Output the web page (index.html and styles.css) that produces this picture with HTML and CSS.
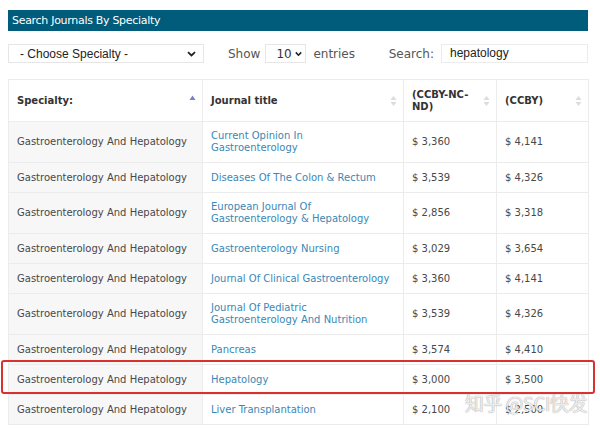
FILE: index.html
```html
<!DOCTYPE html>
<html>
<head>
<meta charset="utf-8">
<link rel="stylesheet" href="styles.css">
</head>
<body>
<div class="page">
  <div class="titlebar">Search Journals By Specialty</div>
  <div class="controls">
    <div class="select specialty"><span>- Choose Specialty -</span><svg class="chev" width="9" height="6" viewBox="0 0 9 6"><path d="M1 1.2 L4.5 4.5 L8 1.2" fill="none" stroke="#222" stroke-width="1.8"/></svg></div>
    <div class="length">Show <div class="select small"><span>10</span><svg class="chev" width="7" height="6" viewBox="0 0 7 6"><path d="M0.8 1.4 L3.5 4.2 L6.2 1.4" fill="none" stroke="#222" stroke-width="1.6"/></svg></div> entries</div>
    <div class="search">Search: <div class="input">hepatology</div></div>
  </div>
  <table class="grid">
    <colgroup><col class="c1"><col class="c2"><col class="c3"><col class="c4"></colgroup>
    <thead>
      <tr>
        <th class="sorted">Specialty:<svg class="sort" width="7" height="10" viewBox="0 0 7 10"><path d="M0.5 7 L3.5 2.5 L6.5 7 Z" fill="#7b7fc4"/></svg></th>
        <th>Journal title<svg class="sort" width="7" height="12" viewBox="0 0 7 12"><path d="M0.5 5 L3.5 1 L6.5 5 Z M0.5 7 L3.5 11 L6.5 7 Z" fill="#dcdcdc"/></svg></th>
        <th>(CCBY-NC-<br>ND)<svg class="sort" width="7" height="12" viewBox="0 0 7 12"><path d="M0.5 5 L3.5 1 L6.5 5 Z M0.5 7 L3.5 11 L6.5 7 Z" fill="#dcdcdc"/></svg></th>
        <th>(CCBY)<svg class="sort" width="7" height="12" viewBox="0 0 7 12"><path d="M0.5 5 L3.5 1 L6.5 5 Z M0.5 7 L3.5 11 L6.5 7 Z" fill="#dcdcdc"/></svg></th>
      </tr>
    </thead>
    <tbody>
      <tr><td>Gastroenterology And Hepatology</td><td><a>Current Opinion In<br>Gastroenterology</a></td><td>$ 3,360</td><td>$ 4,141</td></tr>
      <tr><td>Gastroenterology And Hepatology</td><td><a>Diseases Of The Colon &amp; Rectum</a></td><td>$ 3,539</td><td>$ 4,326</td></tr>
      <tr><td>Gastroenterology And Hepatology</td><td><a>European Journal Of<br>Gastroenterology &amp; Hepatology</a></td><td>$ 2,856</td><td>$ 3,318</td></tr>
      <tr><td>Gastroenterology And Hepatology</td><td><a>Gastroenterology Nursing</a></td><td>$ 3,029</td><td>$ 3,654</td></tr>
      <tr><td>Gastroenterology And Hepatology</td><td><a>Journal Of Clinical Gastroenterology</a></td><td>$ 3,360</td><td>$ 4,141</td></tr>
      <tr><td>Gastroenterology And Hepatology</td><td><a>Journal Of Pediatric<br>Gastroenterology And Nutrition</a></td><td>$ 3,539</td><td>$ 4,326</td></tr>
      <tr><td>Gastroenterology And Hepatology</td><td><a>Pancreas</a></td><td>$ 3,574</td><td>$ 4,410</td></tr>
      <tr><td>Gastroenterology And Hepatology</td><td><a>Hepatology</a></td><td>$ 3,000</td><td>$ 3,500</td></tr>
      <tr><td>Gastroenterology And Hepatology</td><td><a>Liver Transplantation</a></td><td>$ 2,100</td><td>$ 2,500</td></tr>
    </tbody>
  </table>
  <div class="highlight"></div>
  <div class="watermark">知乎 @SCI快发</div>
</div>
</body>
</html>
```

FILE: styles.css
```css
html, body {
  margin: 0;
  padding: 0;
  background: #fff;
}
.page {
  position: relative;
  width: 600px;
  height: 428px;
  overflow: hidden;
  padding: 10px 0 0 8px;
  box-sizing: border-box;
}
.titlebar {
  width: 580px;
  height: 21px;
  background: #015b7a;
  color: #fff;
  font-family: "DejaVu Sans", Verdana, sans-serif;
  font-size: 11px;
  line-height: 21px;
  padding-left: 4px;
  box-sizing: border-box;
  letter-spacing: -0.3px;
}
.controls {
  display: flex;
  align-items: center;
  width: 580px;
  height: 19px;
  margin-top: 13px;
  font-family: "DejaVu Sans", Verdana, sans-serif;
  font-size: 12px;
  color: #555;
}
.select {
  display: flex;
  align-items: center;
  justify-content: space-between;
  height: 19px;
  box-sizing: border-box;
  border: 1px solid #e6e6e6;
  background: #fff;
  font-family: "Liberation Sans", Arial, sans-serif;
  font-size: 12px;
  color: #222;
}
.specialty {
  width: 196px;
  padding: 0 7px 0 11px;
}
.length {
  display: flex;
  align-items: center;
  margin-left: 24px;
}
.small {
  width: 41px;
  margin: 0 7px 0 5px;
  padding: 0 3px 0 10px;
  font-family: "DejaVu Sans", Verdana, sans-serif;
  font-size: 12px;
  color: #333;
}
.search {
  display: flex;
  align-items: center;
  margin-left: auto;
}
.input {
  width: 147px;
  height: 19px;
  margin-left: 7px;
  box-sizing: border-box;
  border: 1px solid #ececec;
  padding-left: 8px;
  font-family: "Liberation Sans", Arial, sans-serif;
  font-size: 12px;
  line-height: 17px;
  color: #222;
}
.chev { display: block; }
.grid {
  width: 580px;
  margin-top: 16px;
  border-collapse: collapse;
  table-layout: fixed;
  font-family: "DejaVu Sans", Verdana, sans-serif;
  font-size: 10px;
  color: #484848;
}
.c1 { width: 194px; }
.c2 { width: 201px; }
.c3 { width: 93px; }
.c4 { width: 92px; }
.grid th, .grid td {
  border: 1px solid #ececec;
  text-align: left;
  vertical-align: middle;
  line-height: 12px;
  white-space: nowrap;
}
.grid th {
  position: relative;
  height: 42px;
  box-sizing: border-box;
  padding: 0 16px 0 8px;
  font-weight: bold;
  color: #333;
  background: #fff;
}
.grid td {
  padding: 8px 7px 8px 8px;
  height: 30px;
  box-sizing: border-box;
  background: #fff;
}
.grid td:first-child {
  background: #f7f7f7;
}
.grid a {
  color: #3b87b6;
  text-decoration: none;
}
.sort {
  position: absolute;
  right: 6px;
  top: 50%;
  transform: translateY(-50%);
}
.sorted .sort {
  top: 13px;
  transform: none;
}
.highlight {
  position: absolute;
  left: 1px;
  top: 360px;
  width: 594px;
  height: 34px;
  box-sizing: border-box;
  border: 2px solid #d7322d;
  border-radius: 3px;
}
.watermark {
  position: absolute;
  left: 465px;
  top: 390px;
  font-family: "Noto Sans CJK SC", "DejaVu Sans", sans-serif;
  font-size: 19px;
  line-height: 26px;
  color: rgba(255, 255, 255, 0.82);
  text-shadow: 0 0 1px rgba(130, 130, 130, 0.6), 0 0 1px rgba(130, 130, 130, 0.6);
  letter-spacing: -0.6px;
}
```
